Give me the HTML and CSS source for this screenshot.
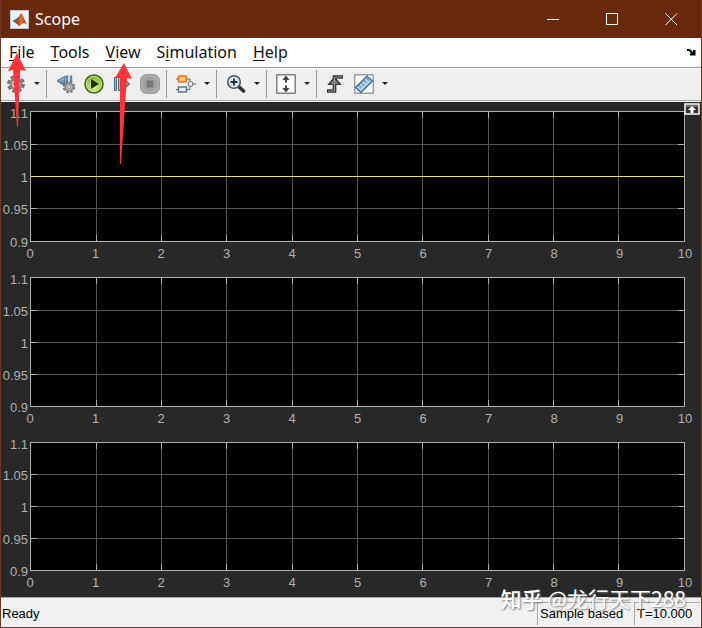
FILE: index.html
```html
<!DOCTYPE html>
<html lang="en">
<head>
<meta charset="utf-8">
<title>Scope</title>
<link rel="stylesheet" href="styles.css">
</head>
<body>
<svg class="defs" aria-hidden="true">
  <defs>
    <linearGradient id="steel" x1="0" y1="0" x2="0" y2="1"><stop offset="0" stop-color="#b9d3e4"/><stop offset="1" stop-color="#43677f"/></linearGradient>
    <radialGradient id="green" cx=".5" cy=".65" r=".6"><stop offset="0" stop-color="#e4fb9c"/><stop offset="1" stop-color="#7fae2e"/></radialGradient>
    <linearGradient id="flame" x1="0" y1="0" x2="1" y2="0"><stop offset="0" stop-color="#8c2410"/><stop offset=".5" stop-color="#e8702a"/><stop offset="1" stop-color="#b3330f"/></linearGradient>
    <symbol id="grid" overflow="visible">
      <g class="grid-line">
        <line x1="10%" x2="10%" y2="100%"/><line x1="20%" x2="20%" y2="100%"/><line x1="30%" x2="30%" y2="100%"/>
        <line x1="40%" x2="40%" y2="100%"/><line x1="50%" x2="50%" y2="100%"/><line x1="60%" x2="60%" y2="100%"/>
        <line x1="70%" x2="70%" y2="100%"/><line x1="80%" x2="80%" y2="100%"/><line x1="90%" x2="90%" y2="100%"/>
        <line x2="100%" y1="25%" y2="25%"/><line x2="100%" y1="50%" y2="50%"/><line x2="100%" y1="75%" y2="75%"/>
      </g>
      <g id="ticks-x" class="tick">
        <line x1="10%" x2="10%" y1="-6" y2="6"/><line x1="20%" x2="20%" y1="-6" y2="6"/><line x1="30%" x2="30%" y1="-6" y2="6"/>
        <line x1="40%" x2="40%" y1="-6" y2="6"/><line x1="50%" x2="50%" y1="-6" y2="6"/><line x1="60%" x2="60%" y1="-6" y2="6"/>
        <line x1="70%" x2="70%" y1="-6" y2="6"/><line x1="80%" x2="80%" y1="-6" y2="6"/><line x1="90%" x2="90%" y1="-6" y2="6"/>
      </g>
      <svg y="100%" overflow="visible"><use href="#ticks-x"/></svg>
      <g id="ticks-y" class="tick">
        <line x1="-6" x2="6" y1="25%" y2="25%"/><line x1="-6" x2="6" y1="50%" y2="50%"/><line x1="-6" x2="6" y1="75%" y2="75%"/>
      </g>
      <svg x="100%" overflow="visible"><use href="#ticks-y"/></svg>
    </symbol>
    <symbol id="gear" viewBox="0 0 20 20">
      <circle cx="10" cy="10" r="7.6" fill="none" stroke="#777" stroke-width="2.6" stroke-dasharray="3.9 2.07"/>
      <circle cx="10" cy="10" r="5.300" fill="#ddd" stroke="#858585" stroke-width="2.800"/>
      <circle cx="10" cy="10" r="2.200" fill="#f4f4f4" stroke="#555"/>
    </symbol>
  </defs>
</svg>

<div class="window">
  <header class="titlebar">
    <svg class="logo" viewBox="0 0 19 19" aria-hidden="true">
      <rect width="19" height="19" fill="#eef3f8"/><rect x=".5" y=".5" width="18" height="18" fill="none" stroke="#b9cadb"/>
      <path d="M2 11 L6 9 L8.500 7 L10.500 3.500 L10 9 L7 14 L5 12.500Z" fill="#3d7396"/>
      <path d="M5 12.500 L8 9.500 L11 3 Q13 4.500 14 8.500 L17 14.500 Q14 12.500 12 14 L9 16.500 L7 13.500Z" fill="url(#flame)"/>
    </svg>
    <h1>Scope</h1>
    <div class="caption">
      <button type="button" aria-label="Minimize"><svg viewBox="0 0 13 13"><path d="M0 6.500H12"/></svg></button>
      <button type="button" aria-label="Maximize"><svg viewBox="0 0 13 13"><path d="M.5 .5H11.500V11.500H.5Z"/></svg></button>
      <button type="button" aria-label="Close"><svg class="smooth" viewBox="0 0 13 13"><path d="M.5 .5L12 12M12 .5L.5 12"/></svg></button>
    </div>
  </header>

  <nav class="menubar">
    <button type="button"><u>F</u>ile</button>
    <button type="button"><u>T</u>ools</button>
    <button type="button"><u>V</u>iew</button>
    <button type="button">S<u>i</u>mulation</button>
    <button type="button"><u>H</u>elp</button>
    <button type="button" class="dock" aria-label="Dock window"><svg viewBox="0 0 9 8"><path d="M0 1H3L6 4V2H8.500V7.500H3V5.500H4.500L2 3H0Z"/></svg></button>
  </nav>

  <div class="toolbar" role="toolbar" aria-label="Scope tools">
    <div class="group">
      <button type="button" class="tool" aria-label="Configuration"><svg><use href="#gear"/></svg></button>
      <button type="button" class="drop" aria-label="Configuration options"></button>
    </div>
    <div class="group">
      <button type="button" class="tool" aria-label="Stepping options"><svg viewBox="0 0 20 20">
        <path d="M1 7L9 2V12Z" fill="url(#steel)" stroke="#456d88"/><path d="M11 1.500V9M15 1.500V9" stroke="#5c84a0" stroke-width="2.400"/>
        <svg x="6" y="6" width="14" height="14"><use href="#gear"/></svg></svg></button>
      <button type="button" class="tool" aria-label="Run"><svg viewBox="0 0 20 20">
        <circle cx="10" cy="10" r="9" fill="url(#green)" stroke="#49661b" stroke-width="1.600"/><circle cx="10" cy="10" r="7.600" fill="none" stroke="#dff0b4" stroke-width=".7"/><path d="M7 5L15 10L7 15Z" fill="#20300f"/></svg></button>
      <button type="button" class="tool" aria-label="Step forward"><svg viewBox="0 0 20 20">
        <path d="M2.500 3.500h2v13h-2zM6.500 3.500h2v13h-2z" fill="#9bbbd0" stroke="#456d88"/><path d="M10.500 4L18 10L10.500 16Z" fill="url(#steel)" stroke="#456d88"/></svg></button>
      <button type="button" class="tool" aria-label="Stop"><svg viewBox="0 0 20 20">
        <rect x=".5" y=".5" width="19" height="19" rx="6" fill="#aaa" stroke="#999"/><circle cx="10" cy="10" r="7" fill="#a0a0a0"/><rect x="6.500" y="6.500" width="7" height="7" fill="#777"/></svg></button>
    </div>
    <div class="group">
      <button type="button" class="tool" aria-label="Highlight block"><svg viewBox="0 0 20 20">
        <path d="M0 5H14V8M0 15.500H14V12M17 10H20" fill="none" stroke="#666"/>
        <rect x="2.500" y="2" width="8" height="6" rx="1" fill="#ffc27a" stroke="#e8721c" stroke-width="1.600"/>
        <rect x="2.500" y="13" width="8" height="5" fill="#e2ecf2" stroke="#5f7482" stroke-width="1.400"/>
        <circle cx="14.500" cy="10" r="2.500" fill="#eee" stroke="#666"/></svg></button>
      <button type="button" class="drop" aria-label="Highlight options"></button>
    </div>
    <div class="group">
      <button type="button" class="tool" aria-label="Zoom"><svg viewBox="0 0 20 20">
        <path d="M12 12L17.500 17" stroke="#333" stroke-width="3.600" stroke-linecap="round"/>
        <circle cx="8" cy="8" r="6.300" fill="#d7e8ee" stroke="#4c5254" stroke-width="1.500"/><path d="M8 4.500V11.500M4.500 8H11.500" stroke="#283038" stroke-width="1.800"/></svg></button>
      <button type="button" class="drop" aria-label="Zoom options"></button>
    </div>
    <div class="group">
      <button type="button" class="tool" aria-label="Scale axes"><svg viewBox="0 0 20 20">
        <rect x=".8" y=".8" width="18.400" height="18.400" fill="#fafafa" stroke="#666" stroke-width="1.200"/>
        <path d="M10 1.500L13.500 6H11V8.500H9V6H6.500ZM10 18.500L13.500 14H11V11.500H9V14H6.500Z" fill="#444"/></svg></button>
      <button type="button" class="drop" aria-label="Scale options"></button>
    </div>
    <div class="group">
      <button type="button" class="tool" aria-label="Triggers"><svg viewBox="0 0 20 20">
        <path d="M1 17H8.500V3H17" fill="none" stroke="#333" stroke-width="3.600"/><path d="M8.500 3.500L14.500 10.500H2.500Z" fill="#777" stroke="#333" stroke-width="1.200"/><path d="M2 17H8.500V3H16" fill="none" stroke="#999" stroke-width="1.200"/></svg></button>
      <button type="button" class="tool" aria-label="Cursor measurements"><svg viewBox="0 0 20 20">
        <rect x=".8" y=".8" width="18.400" height="18.400" fill="#f7f7f4" stroke="#777"/>
        <path d="M1.500 13.500L13 2L18.500 7L7 18.500Z" fill="#a9d0ea" stroke="#38617f" stroke-width="1.200"/>
        <path d="M4.500 11l2.500 2.500M7 8.500l3 3M9.500 6l2.500 2.500M12 3.500l3 3" stroke="#38617f"/></svg></button>
      <button type="button" class="drop" aria-label="Measurement options"></button>
    </div>
  </div>

  <main class="scope">
    <button type="button" class="expand" aria-label="Maximize axes"><svg viewBox="0 0 16 12"><path d="M1 1H15V11H1Z" fill="#333" stroke="#fff" stroke-width="1.500"/><path d="M2 3H14" stroke="#aaa"/><path d="M8 3L12 7H9.500V10H6.500V7H4Z" fill="#fff"/></svg></button>

    <ol class="y-axis"><li>1.1</li><li>1.05</li><li>1</li><li>0.95</li><li>0.9</li></ol>
    <svg class="plot"><use href="#grid" width="100%" height="100%"/><line class="signal" x2="100%" y1="50%" y2="50%"/></svg>
    <ol class="x-axis"><li>0</li><li>1</li><li>2</li><li>3</li><li>4</li><li>5</li><li>6</li><li>7</li><li>8</li><li>9</li><li>10</li></ol>

    <ol class="y-axis"><li>1.1</li><li>1.05</li><li>1</li><li>0.95</li><li>0.9</li></ol>
    <svg class="plot"><use href="#grid" width="100%" height="100%"/></svg>
    <ol class="x-axis"><li>0</li><li>1</li><li>2</li><li>3</li><li>4</li><li>5</li><li>6</li><li>7</li><li>8</li><li>9</li><li>10</li></ol>

    <ol class="y-axis"><li>1.1</li><li>1.05</li><li>1</li><li>0.95</li><li>0.9</li></ol>
    <svg class="plot"><use href="#grid" width="100%" height="100%"/></svg>
    <ol class="x-axis"><li>0</li><li>1</li><li>2</li><li>3</li><li>4</li><li>5</li><li>6</li><li>7</li><li>8</li><li>9</li><li>10</li></ol>
  </main>

  <footer class="status">
    <span class="message">Ready</span>
    <span class="cell mode">Sample based</span>
    <span class="cell time">T=10.000</span>
  </footer>

  <svg class="arrow arrow-file" viewBox="0 0 18 74" aria-hidden="true"><path d="M9 0L18 18L12 17L10 74L9 74L5 17L0 18Z"/></svg>
  <svg class="arrow arrow-view" viewBox="0 0 18 102" aria-hidden="true"><path d="M10 0L18 16L13 15L7 101L6 101L6 15L1 15Z"/></svg>
  <div class="watermark"><b>知乎</b> <span>@龙行天下288</span></div>
</div>
</body>
</html>
```
FILE: styles.css
```css
* { box-sizing: border-box; }

body {
  margin: 0;
  font-family: "Liberation Sans", Arial, sans-serif;
  font-size: 13px;
}

button {
  margin: 0;
  padding: 0;
  border: 0;
  background: none;
  color: inherit;
  font: inherit;
}

ol {
  margin: 0;
  padding: 0;
  list-style: none;
}

.defs {
  position: absolute;
  width: 0;
  height: 0;
}

.window {
  position: relative;
  display: flex;
  flex-direction: column;
  min-height: 100vh;
  border: 1px solid #6b3a26;
  border-top: 0;
}

/* Title bar */
.titlebar {
  display: flex;
  align-items: center;
  height: 38px;
  padding-left: 9px;
  background: #69290d;
  color: #fff;
}

.logo {
  width: 19px;
  height: 19px;
}

h1 {
  margin: 0 0 0 6px;
  font: 16px/20px "Noto Sans", sans-serif;
}

.caption {
  display: flex;
  margin-left: auto;
}

.caption button {
  display: grid;
  place-items: center;
  width: 59px;
  height: 38px;
}

.caption svg {
  width: 13px;
  height: 13px;
  fill: none;
  stroke: #fff;
  shape-rendering: crispEdges;
}

.caption .smooth { shape-rendering: auto; }

/* Menus */
.menubar {
  display: flex;
  align-items: center;
  gap: 16px;
  height: 30px;
  padding: 0 5px 2px 8px;
  border-bottom: 1px solid #999;
  background: #fff;
  color: #111;
  font: 16px/20px "Noto Sans", sans-serif;
}

.menubar u {
  text-decoration-thickness: 1px;
  text-underline-offset: 2px;
}

.dock { margin-left: auto; }

.dock svg {
  display: block;
  width: 9px;
  height: 8px;
}

/* Toolbar */
.toolbar {
  display: flex;
  align-items: center;
  height: 34px;
  padding: 0 1px 3px;
  border-top: 1px solid #fff;
  border-bottom: 1px solid #fff;
  background: #efefef;
  box-shadow: inset 0 -1px #aaa;
}

.group {
  display: flex;
  align-items: center;
  height: 28px;
  padding-right: 2px;
}

.group + .group {
  padding-left: 5px;
  border-left: 1px solid #999;
}

.tool {
  display: grid;
  place-items: center;
  width: 28px;
  height: 28px;
}

.tool > svg {
  width: 20px;
  height: 20px;
}

.drop {
  display: grid;
  place-items: center;
  width: 14px;
  height: 28px;
}

.drop::before {
  content: "";
  border: 3px solid transparent;
  border-top-color: #222;
  border-bottom: 0;
}

/* Plots */
.scope {
  position: relative;
  flex: 1;
  display: grid;
  grid-template-columns: 29px 1fr;
  grid-template-rows:
    minmax(60px, 131fr) 35px
    minmax(60px, 130fr) 35px
    minmax(60px, 129fr) 26px;
  padding: 9px 16px 0 0;
  background: #282828;
  color: #afafaf;
}

.plot {
  contain: size;
  width: 100%;
  height: 100%;
  border: 1px solid #afafaf;
  background: #000;
  shape-rendering: crispEdges;
}

.grid-line { stroke: #555; }

.tick { stroke: #afafaf; }

.signal { stroke: #e6e658; }

.y-axis {
  display: flex;
  flex-direction: column;
  justify-content: space-between;
  padding: 2px 2px 0 0;
}

.y-axis li {
  display: flex;
  align-items: center;
  justify-content: flex-end;
  height: 0;
}

.x-axis {
  grid-column: 2;
  display: flex;
  justify-content: space-between;
  padding-top: 4px;
  line-height: 16px;
}

.x-axis li {
  display: flex;
  justify-content: center;
  width: 0;
}

.expand {
  position: absolute;
  top: 1px;
  right: 1px;
}

.expand svg {
  display: block;
  width: 16px;
  height: 12px;
}

/* Status bar */
.status {
  display: flex;
  align-items: flex-end;
  height: 30px;
  padding: 0 1px 2px;
  border-top: 1px solid #aaa;
  background: #f0f0f0;
  color: #000;
  line-height: 22px;
}

.message { flex: 1; }

.cell {
  height: 23px;
  padding-left: 2px;
  border-top: 1px solid #aaa;
  border-left: 1px solid #aaa;
}

.mode {
  width: 94px;
  margin-right: 3px;
}

.time { width: 66px; }

/* Annotations drawn over the window */
.arrow {
  position: absolute;
  width: 18px;
  fill: #fb3438;
  pointer-events: none;
}

.arrow-file {
  top: 53px;
  left: 7px;
  height: 74px;
}

.arrow-view {
  top: 63px;
  left: 113px;
  height: 102px;
}

.watermark {
  position: absolute;
  right: 15px;
  bottom: 13px;
  color: #fff;
  font: 21px/32px "Noto Sans CJK SC", sans-serif;
  text-shadow: 1px 1px 2px #777;
  white-space: nowrap;
  pointer-events: none;
}

.watermark b { font-weight: 500; }
```
